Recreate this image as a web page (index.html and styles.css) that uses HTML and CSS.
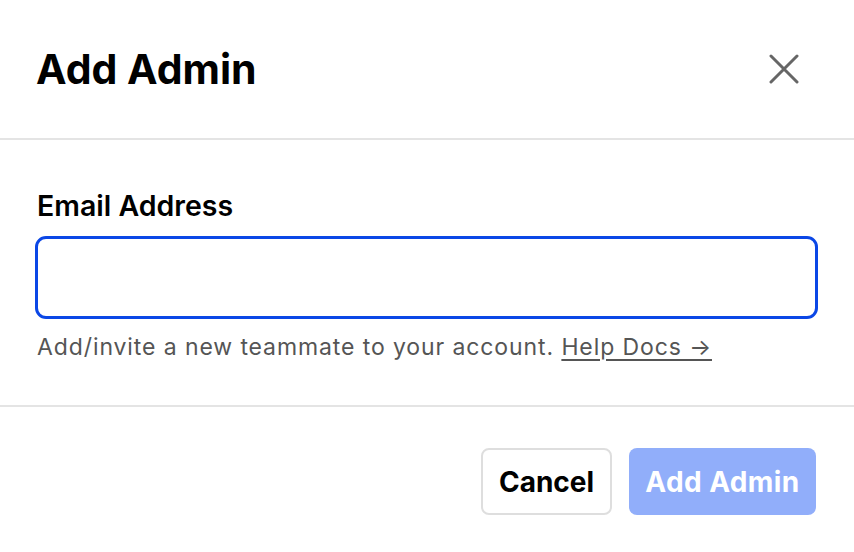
FILE: index.html
```html
<!DOCTYPE html>
<html lang="en">
<head>
<meta charset="utf-8">
<title>Add Admin</title>
<link rel="stylesheet" href="styles.css">
</head>
<body>
<div class="modal">
  <header class="modal-header">
    <h1 class="modal-title">Add Admin</h1>
    <button class="close-btn" aria-label="Close">
      <svg width="30" height="30" viewBox="0 0 30 30"><path d="M2 2 L28 28 M28 2 L2 28" stroke="#666" stroke-width="3" stroke-linecap="round" fill="none"/></svg>
    </button>
  </header>
  <section class="modal-body">
    <label class="field-label" for="email">Email Address</label>
    <input class="field-input" id="email" type="email">
    <p class="field-help">Add/invite a new teammate to your account. <a class="help-link" href="#">Help Docs →</a></p>
  </section>
  <footer class="modal-footer">
    <button class="btn btn-secondary">Cancel</button>
    <button class="btn btn-primary" disabled>Add Admin</button>
  </footer>
</div>
</body>
</html>
```

FILE: styles.css
```css
* { box-sizing: border-box; }
html, body { margin: 0; padding: 0; background: #fff; }
body {
  font-family: Inter, "Noto Sans", "Liberation Sans", sans-serif;
  color: #000;
  width: 854px;
  height: 552px;
  overflow: hidden;
}
.modal {
  display: flex;
  flex-direction: column;
  height: 552px;
}
.modal-header {
  height: 140px;
  display: flex;
  align-items: center;
  justify-content: space-between;
  padding: 0 55px 0 36px;
  border-bottom: 2px solid #e4e4e4;
}
.modal-title {
  margin: 0;
  font-size: 41px;
  font-weight: 700;
  letter-spacing: 0;
}
.close-btn {
  background: none;
  border: 0;
  padding: 0;
  width: 30px;
  height: 30px;
  display: flex;
}
.modal-body {
  height: 267px;
  padding: 47px 36px 0 35px;
  border-bottom: 2px solid #e4e4e4;
  display: flex;
  flex-direction: column;
}
.field-label {
  font-size: 28.5px;
  font-weight: 600;
  line-height: 38px;
  margin-left: 2px;
}
.field-input {
  margin-top: 11px;
  height: 83px;
  width: 100%;
  border: 3px solid #0b47e6;
  border-radius: 11px;
  outline: none;
  background: #fff;
}
.field-help {
  margin: 13px 0 0 2px;
  font-size: 23px;
  line-height: 30px;
  letter-spacing: 0.9px;
  color: #555;
}
.help-link {
  color: #555;
  text-decoration: underline;
  text-underline-offset: 4px;
  text-decoration-thickness: 2px;
}
.modal-footer {
  flex: 1;
  display: flex;
  align-items: center;
  justify-content: flex-end;
  gap: 17px;
  padding: 4px 38px 0 0;
}
.btn {
  font-family: inherit;
  height: 67px;
  border-radius: 8px;
  font-size: 28px;
  font-weight: 700;
  padding: 0;
}
.btn-secondary {
  width: 131px;
  background: #fff;
  border: 2px solid #dedede;
  color: #000;
}
.btn-primary {
  width: 187px;
  background: #91aefa;
  border: 0;
  color: #fff;
  letter-spacing: 0.4px;
}
```
